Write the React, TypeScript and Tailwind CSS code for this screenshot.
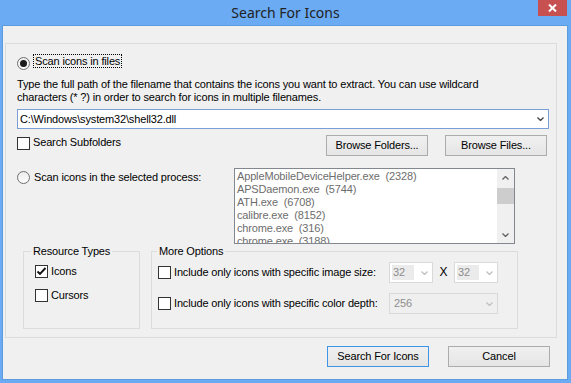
import type { ReactNode } from "react";

const processes = [
  "AppleMobileDeviceHelper.exe  (2328)",
  "APSDaemon.exe  (5744)",
  "ATH.exe  (6708)",
  "calibre.exe  (8152)",
  "chrome.exe  (316)",
  "chrome.exe  (3188)",
];

function Chevron({ up = false, color = "#404040" }: { up?: boolean; color?: string }) {
  return (
    <svg width="7" height="4" viewBox="0 0 7 4" className={up ? "rotate-180" : ""}>
      <path d="M0.5 0.5 L3.5 3.5 L6.5 0.5" fill="none" stroke={color} strokeWidth="1.3" />
    </svg>
  );
}

function Radio({ checked = false }: { checked?: boolean }) {
  return (
    <span className="flex h-[13px] w-[13px] shrink-0 items-center justify-center rounded-full border border-[#6f6f6f] bg-[linear-gradient(#ececec,#fcfcfc)]">
      {checked && <span className="h-[7px] w-[7px] rounded-full bg-[#1b1b1b]" />}
    </span>
  );
}

function Checkbox({ checked = false }: { checked?: boolean }) {
  return (
    <span className="flex h-[13px] w-[13px] shrink-0 items-center justify-center border border-[#333] bg-white">
      {checked && (
        <svg width="11" height="11" viewBox="0 0 11 11">
          <path d="M1.5 5.5 L4 8 L9.5 2" fill="none" stroke="#111" strokeWidth="1.9" />
        </svg>
      )}
    </span>
  );
}

function Button({ children, primary = false }: { children: ReactNode; primary?: boolean }) {
  return (
    <button
      type="button"
      className={
        primary
          ? "flex h-[21px] w-[102px] items-center justify-center border border-[#3d95e8] bg-[linear-gradient(#f0f0f0,#e5e5e5)]"
          : "flex h-[21px] w-[102px] items-center justify-center border border-[#acacac] bg-[linear-gradient(#f0f0f0,#e5e5e5)]"
      }
    >
      {children}
    </button>
  );
}

export default function App() {
  return (
    <div className="flex h-[383px] w-[571px] flex-col bg-[#6aabf3] font-['Liberation_Sans',Arial,sans-serif] text-[11px] leading-[13px] tracking-[-0.15px] text-black">
      {/* title bar */}
      <div className="flex h-[25px] shrink-0 items-start">
        <div className="w-[33px]" />
        <div className="flex h-[25px] flex-1 items-center justify-center font-['Noto_Sans',sans-serif] text-[14px] tracking-normal text-[#222]">
          Search For Icons
        </div>
        <div className="flex h-[16px] w-[29px] items-center justify-center bg-[#c75050]">
          <svg width="9" height="8" viewBox="0 0 9 8">
            <path d="M1 0.5 L8 7.5 M8 0.5 L1 7.5" stroke="#fff" strokeWidth="2" />
          </svg>
        </div>
        <div className="w-[4px]" />
      </div>

      {/* client area */}
      <div className="mb-[3px] ml-[2px] mr-[3px] flex flex-1 flex-col border border-[#5b9be0] bg-[#f0f0f0]">
        <div className="ml-[2px] mt-[17px] flex h-[295px] w-[552px] flex-col border border-[#dcdcdc] pl-[11px]">
          <div className="mt-[10px] flex items-start">
            <span className="mt-[3px]">
              <Radio checked />
            </span>
            <span className="ml-[3px] border border-dotted border-black px-[1px] leading-[12px]">
              Scan icons in files
            </span>
          </div>

          <p className="mt-[8px] whitespace-nowrap">
            Type the full path of the filename that contains the icons you want to extract. You can use wildcard
            <br />
            characters (* ?) in order to search for icons in multiple filenames.
          </p>

          <div className="mt-[5px] flex h-[20px] w-[532px] items-center border border-[#7a9fd6] bg-white pl-[2px] pr-[4px]">
            <span className="flex-1">C:\Windows\system32\shell32.dll</span>
            <Chevron />
          </div>

          <div className="mt-[6px] flex h-[21px] w-[530px] items-start">
            <span className="mt-[2px]">
              <Checkbox />
            </span>
            <span className="ml-[3px] mt-[1px]">Search Subfolders</span>
            <div className="flex-1" />
            <Button>Browse Folders...</Button>
            <div className="w-[17px]" />
            <Button>Browse Files...</Button>
          </div>

          <div className="mt-[12px] flex">
            <div className="flex w-[217px] items-start">
              <span className="mt-[3px]">
                <Radio />
              </span>
              <span className="ml-[4px] mt-[3px]">Scan icons in the selected process:</span>
            </div>
            <div className="flex h-[76px] w-[281px] border border-[#828790] bg-white">
              <div className="flex-1 overflow-hidden pl-[2px] pt-[1px] text-[#6d6d6d]">
                {processes.map((p, i) => (
                  <div key={i} className="whitespace-pre">
                    {p}
                  </div>
                ))}
              </div>
              <div className="flex w-[17px] flex-col bg-[#f0f0f0]">
                <div className="flex h-[18px] items-center justify-center">
                  <Chevron up color="#606060" />
                </div>
                <div className="mt-[1px] h-[16px] bg-[#cdcdcd]" />
                <div className="flex-1" />
                <div className="flex h-[17px] items-center justify-center">
                  <Chevron color="#606060" />
                </div>
              </div>
            </div>
          </div>

          <div className="ml-[6px] mt-[7px] flex">
            <div className="h-[78px] w-[117px] border border-[#dcdcdc]">
              <div className="-mt-[7px] ml-[7px] w-fit bg-[#f0f0f0] px-[2px]">Resource Types</div>
              <div className="mt-[7px] flex h-[13px] items-center pl-[11px]">
                <Checkbox checked />
                <span className="ml-[3px]">Icons</span>
              </div>
              <div className="mt-[11px] flex h-[13px] items-center pl-[11px]">
                <Checkbox />
                <span className="ml-[3px]">Cursors</span>
              </div>
            </div>

            <div className="ml-[11px] h-[78px] w-[367px] border border-[#dcdcdc]">
              <div className="-mt-[7px] ml-[5px] w-fit bg-[#f0f0f0] px-[2px]">More Options</div>
              <div className="mt-[4px] flex h-[21px] items-center pl-[6px]">
                <div className="flex w-[231px] items-center">
                  <Checkbox />
                  <span className="ml-[3px]">Include only icons with specific image size:</span>
                </div>
                <div className="flex h-[21px] w-[44px] items-center border border-[#d9d9d9] bg-white pl-[2px] pr-[4px]">
                  <span className="flex h-[15px] w-[22px] items-center bg-[#ebebeb] pl-[1px] text-[#8d8d8d]">32</span>
                  <div className="flex-1" />
                  <Chevron color="#c0c0c0" />
                </div>
                <span className="flex w-[21px] justify-center text-[12px]">X</span>
                <div className="flex h-[21px] w-[44px] items-center border border-[#d9d9d9] bg-white pl-[2px] pr-[4px]">
                  <span className="flex h-[15px] w-[22px] items-center bg-[#ebebeb] pl-[1px] text-[#8d8d8d]">32</span>
                  <div className="flex-1" />
                  <Chevron color="#c0c0c0" />
                </div>
              </div>
              <div className="mt-[10px] flex h-[21px] items-center pl-[6px]">
                <div className="flex w-[231px] items-center">
                  <Checkbox />
                  <span className="ml-[3px]">Include only icons with specific color depth:</span>
                </div>
                <div className="flex h-[21px] w-[109px] items-center border border-[#d9d9d9] bg-[#efefef] pl-[4px] pr-[4px]">
                  <span className="flex-1 text-[#8d8d8d]">256</span>
                  <Chevron color="#c0c0c0" />
                </div>
              </div>
            </div>
          </div>
        </div>

        <div className="mt-[8px] flex justify-end gap-[19px] pr-[17px]">
          <Button primary>Search For Icons</Button>
          <Button>Cancel</Button>
        </div>
      </div>
    </div>
  );
}
